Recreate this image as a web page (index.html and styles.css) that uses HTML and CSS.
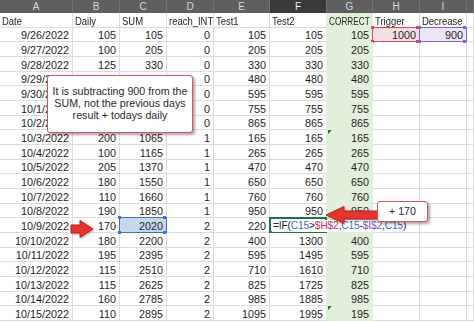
FILE: index.html
```html
<!DOCTYPE html>
<html lang="en">
<head>
<meta charset="UTF-8">
<meta name="viewport" content="width=device-width, initial-scale=1.0">
<title>Sheet</title>
<link rel="stylesheet" href="styles.css">
</head>
<body>
<div class="sheet">
    <div class="row head">
        <div>A</div><div>B</div><div>C</div><div>D</div><div>E</div><div class="sel">F</div><div>G</div><div>H</div><div>I</div><div></div>
    </div>
    <div class="row">
        <div class="c t"><span>Date</span></div><div class="c t"><span>Daily</span></div><div class="c t"><span>SUM</span></div><div class="c t"><span>reach_INT</span></div><div class="c t"><span>Test1</span></div><div class="c t"><span>Test2</span></div><div class="c t g"><span class="caps">CORRECT</span></div><div class="c t"><span>Trigger</span></div><div class="c t"><span>Decrease</span></div><div class="c"></div>
    </div>
    <div class="row">
        <div class="c">9/26/2022</div><div class="c">105</div><div class="c">105</div><div class="c">0</div><div class="c">105</div><div class="c">105</div><div class="c g">105</div><div class="c ref red">1000</div><div class="c ref pur">900</div><div class="c"></div>
    </div>
    <div class="row">
        <div class="c">9/27/2022</div><div class="c">100</div><div class="c">205</div><div class="c">0</div><div class="c">205</div><div class="c">205</div><div class="c g">205</div><div class="c"></div><div class="c"></div><div class="c"></div>
    </div>
    <div class="row">
        <div class="c">9/28/2022</div><div class="c">125</div><div class="c">330</div><div class="c">0</div><div class="c">330</div><div class="c">330</div><div class="c g">330</div><div class="c"></div><div class="c"></div><div class="c"></div>
    </div>
    <!-- rows 9/29 .. 10/2: Daily and SUM sit under the note -->
    <div class="row">
        <div class="c">9/29/2022</div><div class="c"></div><div class="c"></div><div class="c">0</div><div class="c">480</div><div class="c">480</div><div class="c g">480</div><div class="c"></div><div class="c"></div><div class="c"></div>
    </div>
    <div class="row">
        <div class="c">9/30/2022</div><div class="c"></div><div class="c"></div><div class="c">0</div><div class="c">595</div><div class="c">595</div><div class="c g">595</div><div class="c"></div><div class="c"></div><div class="c"></div>
    </div>
    <div class="row">
        <div class="c">10/1/2022</div><div class="c"></div><div class="c"></div><div class="c">0</div><div class="c">755</div><div class="c">755</div><div class="c g">755</div><div class="c"></div><div class="c"></div><div class="c"></div>
    </div>
    <div class="row">
        <div class="c">10/2/2022</div><div class="c"></div><div class="c"></div><div class="c">0</div><div class="c">865</div><div class="c">865</div><div class="c g">865</div><div class="c"></div><div class="c"></div><div class="c"></div>
    </div>
    <div class="row">
        <div class="c">10/3/2022</div><div class="c">200</div><div class="c">1065</div><div class="c">1</div><div class="c">165</div><div class="c">165</div><div class="c g err">165</div><div class="c"></div><div class="c"></div><div class="c"></div>
    </div>
    <div class="row">
        <div class="c">10/4/2022</div><div class="c">100</div><div class="c">1165</div><div class="c">1</div><div class="c">265</div><div class="c">265</div><div class="c g">265</div><div class="c"></div><div class="c"></div><div class="c"></div>
    </div>
    <div class="row">
        <div class="c">10/5/2022</div><div class="c">205</div><div class="c">1370</div><div class="c">1</div><div class="c">470</div><div class="c">470</div><div class="c g">470</div><div class="c"></div><div class="c"></div><div class="c"></div>
    </div>
    <div class="row">
        <div class="c">10/6/2022</div><div class="c">180</div><div class="c">1550</div><div class="c">1</div><div class="c">650</div><div class="c">650</div><div class="c g">650</div><div class="c"></div><div class="c"></div><div class="c"></div>
    </div>
    <div class="row">
        <div class="c">10/7/2022</div><div class="c">110</div><div class="c">1660</div><div class="c">1</div><div class="c">760</div><div class="c">760</div><div class="c g">760</div><div class="c"></div><div class="c"></div><div class="c"></div>
    </div>
    <div class="row">
        <div class="c">10/8/2022</div><div class="c">190</div><div class="c">1850</div><div class="c">1</div><div class="c">950</div><div class="c">950</div><div class="c g">950</div><div class="c"></div><div class="c"></div><div class="c"></div>
    </div>
    <div class="row">
        <div class="c">10/9/2022</div><div class="c">170</div><div class="c ref blue">2020</div><div class="c">2</div><div class="c">220</div>
        <div class="c edit"><span class="fx">=IF(<span class="k-blue">C15</span>&gt;<span class="k-red">$H$2</span>,<span class="k-blue">C15</span>-<span class="k-pur">$I$2</span>,<span class="k-blue">C15</span>)</span></div>
        <div class="c g"></div><div class="c"></div><div class="c"></div><div class="c"></div>
    </div>
    <div class="row">
        <div class="c">10/10/2022</div><div class="c">180</div><div class="c">2200</div><div class="c">2</div><div class="c">400</div><div class="c">1300</div><div class="c g">400</div><div class="c"></div><div class="c"></div><div class="c"></div>
    </div>
    <div class="row">
        <div class="c">10/11/2022</div><div class="c">195</div><div class="c">2395</div><div class="c">2</div><div class="c">595</div><div class="c">1495</div><div class="c g">595</div><div class="c"></div><div class="c"></div><div class="c"></div>
    </div>
    <div class="row">
        <div class="c">10/12/2022</div><div class="c">115</div><div class="c">2510</div><div class="c">2</div><div class="c">710</div><div class="c">1610</div><div class="c g">710</div><div class="c"></div><div class="c"></div><div class="c"></div>
    </div>
    <div class="row">
        <div class="c">10/13/2022</div><div class="c">115</div><div class="c">2625</div><div class="c">2</div><div class="c">825</div><div class="c">1725</div><div class="c g">825</div><div class="c"></div><div class="c"></div><div class="c"></div>
    </div>
    <div class="row">
        <div class="c">10/14/2022</div><div class="c">160</div><div class="c">2785</div><div class="c">2</div><div class="c">985</div><div class="c">1885</div><div class="c g">985</div><div class="c"></div><div class="c"></div><div class="c"></div>
    </div>
    <div class="row">
        <div class="c">10/15/2022</div><div class="c">110</div><div class="c">2895</div><div class="c">2</div><div class="c">1095</div><div class="c">1995</div><div class="c g err">195</div><div class="c"></div><div class="c"></div><div class="c"></div>
    </div>

    <!-- annotations drawn on top of the sheet -->
    <div class="note note-big">It is subtracting 900 from the<br>SUM, not the previous days<br>result + todays daily</div>
    <div class="note note-small">+ 170</div>

    <svg class="arrow arrow-left" width="54" height="20" viewBox="0 0 54 20">
        <path d="M1 10 L19 1.5 L19 6 L53 6 L53 14 L19 14 L19 18.5 Z" fill="#e6332f" stroke="#c2221f" stroke-width="1"/>
    </svg>
    <svg class="arrow arrow-right" width="24" height="20" viewBox="0 0 24 20">
        <path d="M23 10 L10 1.5 L10 6 L1 6 L1 14 L10 14 L10 18.5 Z" fill="#e6332f" stroke="#c2221f" stroke-width="1"/>
    </svg>
</div>
</body>
</html>
```

FILE: styles.css
```css
body {
    margin: 0;
    padding: 0;
    background-color: #ffffff;
    font-family: "Liberation Sans", Arial, sans-serif;
    color: #1e1e1e;
    overflow: hidden;
}

.sheet {
    position: relative;
    width: 474px;
    height: 322px;
    overflow: hidden;
}

.row {
    display: grid;
    grid-template-columns: 73px 47px 47px 47px 56px 57px 46px 47px 47px 1fr;
    height: 14.68px;
}

.row.head {
    height: 13px;
    background-color: #5f5f5f;
}

.head div {
    color: #d9d9d9;
    font-size: 10px;
    line-height: 13px;
    text-align: center;
    border-right: 1px solid #737373;
}

.head div.sel {
    background-color: #3a3a3a;
    color: #f0f0f0;
}

.c {
    box-sizing: border-box;
    border-right: 1px solid #dcdcdc;
    border-bottom: 1px solid #dcdcdc;
    font-size: 10.8px;
    line-height: 11px;
    padding: 0 3px 0 2px;
    display: flex;
    align-items: flex-end;
    justify-content: flex-end;
    white-space: nowrap;
    overflow: hidden;
}

.c.t {
    justify-content: flex-start;
    font-size: 11px;
}

/* header words are set narrower, like the sheet's own font */
.c.t span {
    display: inline-block;
    transform: scaleX(0.86);
    transform-origin: left bottom;
}

.c.t span.caps {
    transform: scaleX(0.75);
}

.c.g {
    background-color: #e2efda;
    border-color: #e2efda;
    box-shadow: -1px 0 0 #e2efda;
    position: relative;
}

.c.err::before {
    content: "";
    position: absolute;
    left: 1px;
    top: 0;
    border-top: 4px solid #1e7b3c;
    border-right: 4px solid transparent;
}

/* highlighted references while editing the formula */
.c.ref {
    position: relative;
    overflow: visible;
    border: 1px solid;
    margin: -1px 0 0 -1px;
}

.c.ref::before,
.c.ref::after {
    content: "";
    position: absolute;
    left: -2px;
    width: 3px;
    height: 3px;
}

.c.ref::before {
    top: -2px;
}

.c.ref::after {
    bottom: -2px;
}

.c.red {
    background-color: #f6dfe2;
    border-color: #d4475a;
}

.c.red::before,
.c.red::after {
    background-color: #d4475a;
    box-shadow: 45px 0 0 #d4475a;
}

.c.pur {
    background-color: #ece6f5;
    border-color: #8a5ccc;
}

.c.pur::before,
.c.pur::after {
    background-color: #8a5ccc;
    box-shadow: 45px 0 0 #8a5ccc;
}

.c.blue {
    background-color: #c6d8ef;
    border-color: #3e6fc5;
}

.c.blue::before,
.c.blue::after {
    background-color: #3e6fc5;
    box-shadow: 45px 0 0 #3e6fc5;
}

.c.edit {
    position: relative;
    overflow: visible;
    z-index: 2;
    border: 2px solid #217346;
    margin: -1px 0 0 -1px;
    justify-content: flex-start;
    padding: 0;
}

.fx {
    position: absolute;
    left: 1px;
    bottom: -1px;
    padding: 0 3px 1px 1px;
    background-color: #ffffff;
    font-size: 10.2px;
    line-height: 11px;
    letter-spacing: -0.15px;
    color: #1e1e1e;
}

.k-blue {
    color: #3b6cc4;
}

.k-red {
    color: #c8305a;
}

.k-pur {
    color: #7a4cc0;
}

/* callouts */
.note {
    position: absolute;
    z-index: 7;
    box-sizing: border-box;
    background-color: #ffffff;
    border: 1.5px solid #d9545a;
    border-radius: 3px;
    box-shadow: 2px 2px 3px rgba(0, 0, 0, 0.35);
    display: flex;
    align-items: center;
    justify-content: center;
    text-align: center;
    font-size: 10.7px;
    line-height: 11.7px;
    color: #2a2a2a;
}

.note-big {
    left: 47px;
    top: 75px;
    width: 146px;
    height: 58px;
}

.note-small {
    left: 377px;
    top: 201px;
    width: 51px;
    height: 21px;
}

.arrow {
    position: absolute;
    z-index: 6;
    filter: drop-shadow(1px 1px 1px rgba(0, 0, 0, 0.3));
}

.arrow-left {
    left: 325px;
    top: 205px;
}

.arrow-right {
    left: 70px;
    top: 219px;
}
```
